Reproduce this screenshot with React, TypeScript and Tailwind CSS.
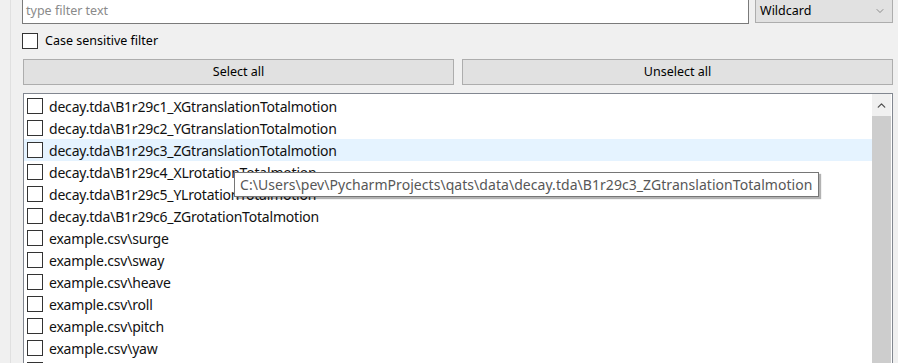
import { ChevronDown, ChevronUp } from "lucide-react";

const items = [
  "decay.tda\\B1r29c1_XGtranslationTotalmotion",
  "decay.tda\\B1r29c2_YGtranslationTotalmotion",
  "decay.tda\\B1r29c3_ZGtranslationTotalmotion",
  "decay.tda\\B1r29c4_XLrotationTotalmotion",
  "decay.tda\\B1r29c5_YLrotationTotalmotion",
  "decay.tda\\B1r29c6_ZGrotationTotalmotion",
  "example.csv\\surge",
  "example.csv\\sway",
  "example.csv\\heave",
  "example.csv\\roll",
  "example.csv\\pitch",
  "example.csv\\yaw",
  "",
];

const HOVER = 2;

export default function App() {
  return (
    <div
      className="relative w-[898px] h-[363px] overflow-hidden bg-[#f0f0f0] flex"
      style={{ fontFamily: '"Noto Sans", "Open Sans", sans-serif' }}
    >
      <div className="w-[11px] border-r border-[#e0e0e0] shrink-0" />

      <div className="w-[882px] shrink-0 pl-[11px] flex flex-col">
        {/* filter row */}
        <div className="flex -mt-px">
          <div className="w-[727px] shrink-0 h-[25px] bg-white border border-[#7a7a7a] flex items-center px-[3px] text-[12.5px] text-[#8a8a8a]">
            type filter text
          </div>
          <div className="ml-[6px] w-[138px] shrink-0 h-[24px] bg-[#e1e1e1] border border-[#adadad] flex items-center justify-between pl-[4px] pr-[6px] text-[12.5px] text-black">
            <span>Wildcard</span>
            <ChevronDown size={12} strokeWidth={1.2} className="text-[#505050]" />
          </div>
        </div>

        {/* case sensitive */}
        <div className="flex items-center gap-[7px] mt-[9px] h-[16px]">
          <div className="w-[16px] h-[16px] border border-[#333] bg-white" />
          <span className="text-[12.5px] text-black">Case sensitive filter</span>
        </div>

        {/* buttons */}
        <div className="flex gap-[8px] mt-[10px] pl-px">
          <button className="flex-1 h-[26px] bg-[#e1e1e1] border border-[#adadad] text-[12.5px] text-black">
            Select all
          </button>
          <button className="flex-1 h-[26px] bg-[#e1e1e1] border border-[#adadad] text-[12.5px] text-black">
            Unselect all
          </button>
        </div>

        {/* list */}
        <div className="mt-[8px] pl-px flex-1 min-h-0">
          <div className="h-[300px] border border-[#828790] bg-white flex">
            <div className="flex-1 pt-px">
              {items.map((t, i) => (
                <div
                  key={i}
                  className={
                    "h-[22px] flex items-center pl-[3px] gap-[6px] " +
                    (i === HOVER ? "bg-[#e5f3ff]" : "")
                  }
                >
                  <div className="w-[16px] h-[16px] border border-[#333] bg-white shrink-0" />
                  {t && (
                    <span className="text-[14px] text-[#111] tracking-[-0.2px] whitespace-nowrap">
                      {t}
                    </span>
                  )}
                </div>
              ))}
            </div>
            <div className="w-[19px] mr-px bg-[#f0f0f0] flex flex-col">
              <div className="h-[22px] flex items-center justify-center">
                <ChevronUp size={13} strokeWidth={2.4} className="text-[#505050]" />
              </div>
              <div className="flex-1 bg-[#cdcdcd]" />
            </div>
          </div>
        </div>
      </div>

      {/* tooltip */}
      <div className="absolute left-[234px] top-[172px] h-[25px] px-[5px] flex items-center bg-white border border-[#767676] shadow-[2px_2px_1px_rgba(0,0,0,0.3)] text-[14px] text-[#575757] tracking-[0.05px] whitespace-nowrap">
        C:\Users\pev\PycharmProjects\qats\data\decay.tda\B1r29c3_ZGtranslationTotalmotion
      </div>
    </div>
  );
}
